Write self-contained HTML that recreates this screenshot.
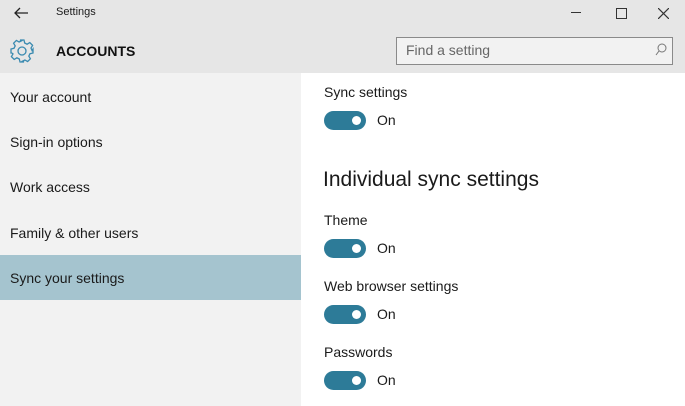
<!DOCTYPE html><html><head><style>
body{margin:0;width:685px;height:406px;position:relative;overflow:hidden;background:#fff;font-family:"Liberation Sans",sans-serif;color:#1a1a1a}
.a{position:absolute;white-space:nowrap}
.tg{position:absolute;left:324px;width:42px;height:19px;border-radius:10px;background:#2d7b98}
.tg:after{content:"";position:absolute;right:5px;top:5px;width:9px;height:9px;border-radius:50%;background:#fff}
.on{position:absolute;left:377px;font-size:14px}
.lb{position:absolute;left:324px;font-size:14px}
.nav{position:absolute;left:10px;font-size:14px}
</style></head><body>
<div class="a" style="left:0;top:0;width:685px;height:73px;background:#e6e6e6"></div>
<div class="a" style="left:0;top:73px;width:301px;height:333px;background:#f2f2f2"></div>
<div class="a" style="left:0;top:255px;width:301px;height:45px;background:#a5c4cf"></div>
<svg class="a" style="left:13px;top:6px" width="16" height="14"><path d="M15 7H2M7 2L2 7l5 5" stroke="#222" stroke-width="1.3" fill="none"/></svg>
<div class="a" style="left:56px;top:6px;font-size:11px">Settings</div>
<svg class="a" style="left:571px;top:12px" width="12" height="2"><rect width="10" height="1" fill="#333"/></svg>
<div class="a" style="left:616px;top:8px;width:9px;height:9px;border:1px solid #333"></div>
<svg class="a" style="left:658px;top:8px" width="11" height="11"><path d="M0 0L11 11M11 0L0 11" stroke="#333" stroke-width="1.2"/></svg>
<svg class="a" style="left:9px;top:38px" width="26" height="26" viewBox="0 0 26 26"><g fill="none" stroke="#3a8ab0" stroke-width="1.3"><path d="M11 2h4l.7 3 2.4 1.2 2.7-1.6 2.8 2.8-1.6 2.7L23 12.4v0L24 11v4l-3 .7-1.2 2.4 1.6 2.7-2.8 2.8-2.7-1.6-2.4 1.2L15 24h-4l-.7-3-2.4-1.2-2.7 1.6-2.8-2.8 1.6-2.7L2.8 15 2 15v-4l3-.7 1.2-2.4-1.6-2.7 2.8-2.8 2.7 1.6 2.4-1.2z"/><circle cx="13" cy="13" r="4"/></g></svg>
<div class="a" style="left:56px;top:43px;font-size:14px;font-weight:bold;color:#111">ACCOUNTS</div>
<div class="a" style="left:396px;top:37px;width:275px;height:26px;border:1px solid #8a8a8a;background:#f2f2f2"></div>
<div class="a" style="left:406px;top:42px;font-size:14px;color:#666">Find a setting</div>
<svg class="a" style="left:655px;top:43px" width="12" height="13"><circle cx="7" cy="5" r="4" stroke="#777" fill="none"/><path d="M4 8L1 12" stroke="#777"/></svg>
<div class="nav" style="top:89px">Your account</div>
<div class="nav" style="top:134px">Sign-in options</div>
<div class="nav" style="top:179px">Work access</div>
<div class="nav" style="top:225px">Family &amp; other users</div>
<div class="nav" style="top:270px">Sync your settings</div>
<div class="lb" style="top:84px">Sync settings</div>
<div class="tg" style="top:111px"></div><div class="on" style="top:112px">On</div>
<div class="a" style="left:323px;top:168px;font-size:21px">Individual sync settings</div>
<div class="lb" style="top:212px">Theme</div>
<div class="tg" style="top:239px"></div><div class="on" style="top:240px">On</div>
<div class="lb" style="top:278px">Web browser settings</div>
<div class="tg" style="top:305px"></div><div class="on" style="top:306px">On</div>
<div class="lb" style="top:344px">Passwords</div>
<div class="tg" style="top:371px"></div><div class="on" style="top:372px">On</div>
</body></html>
